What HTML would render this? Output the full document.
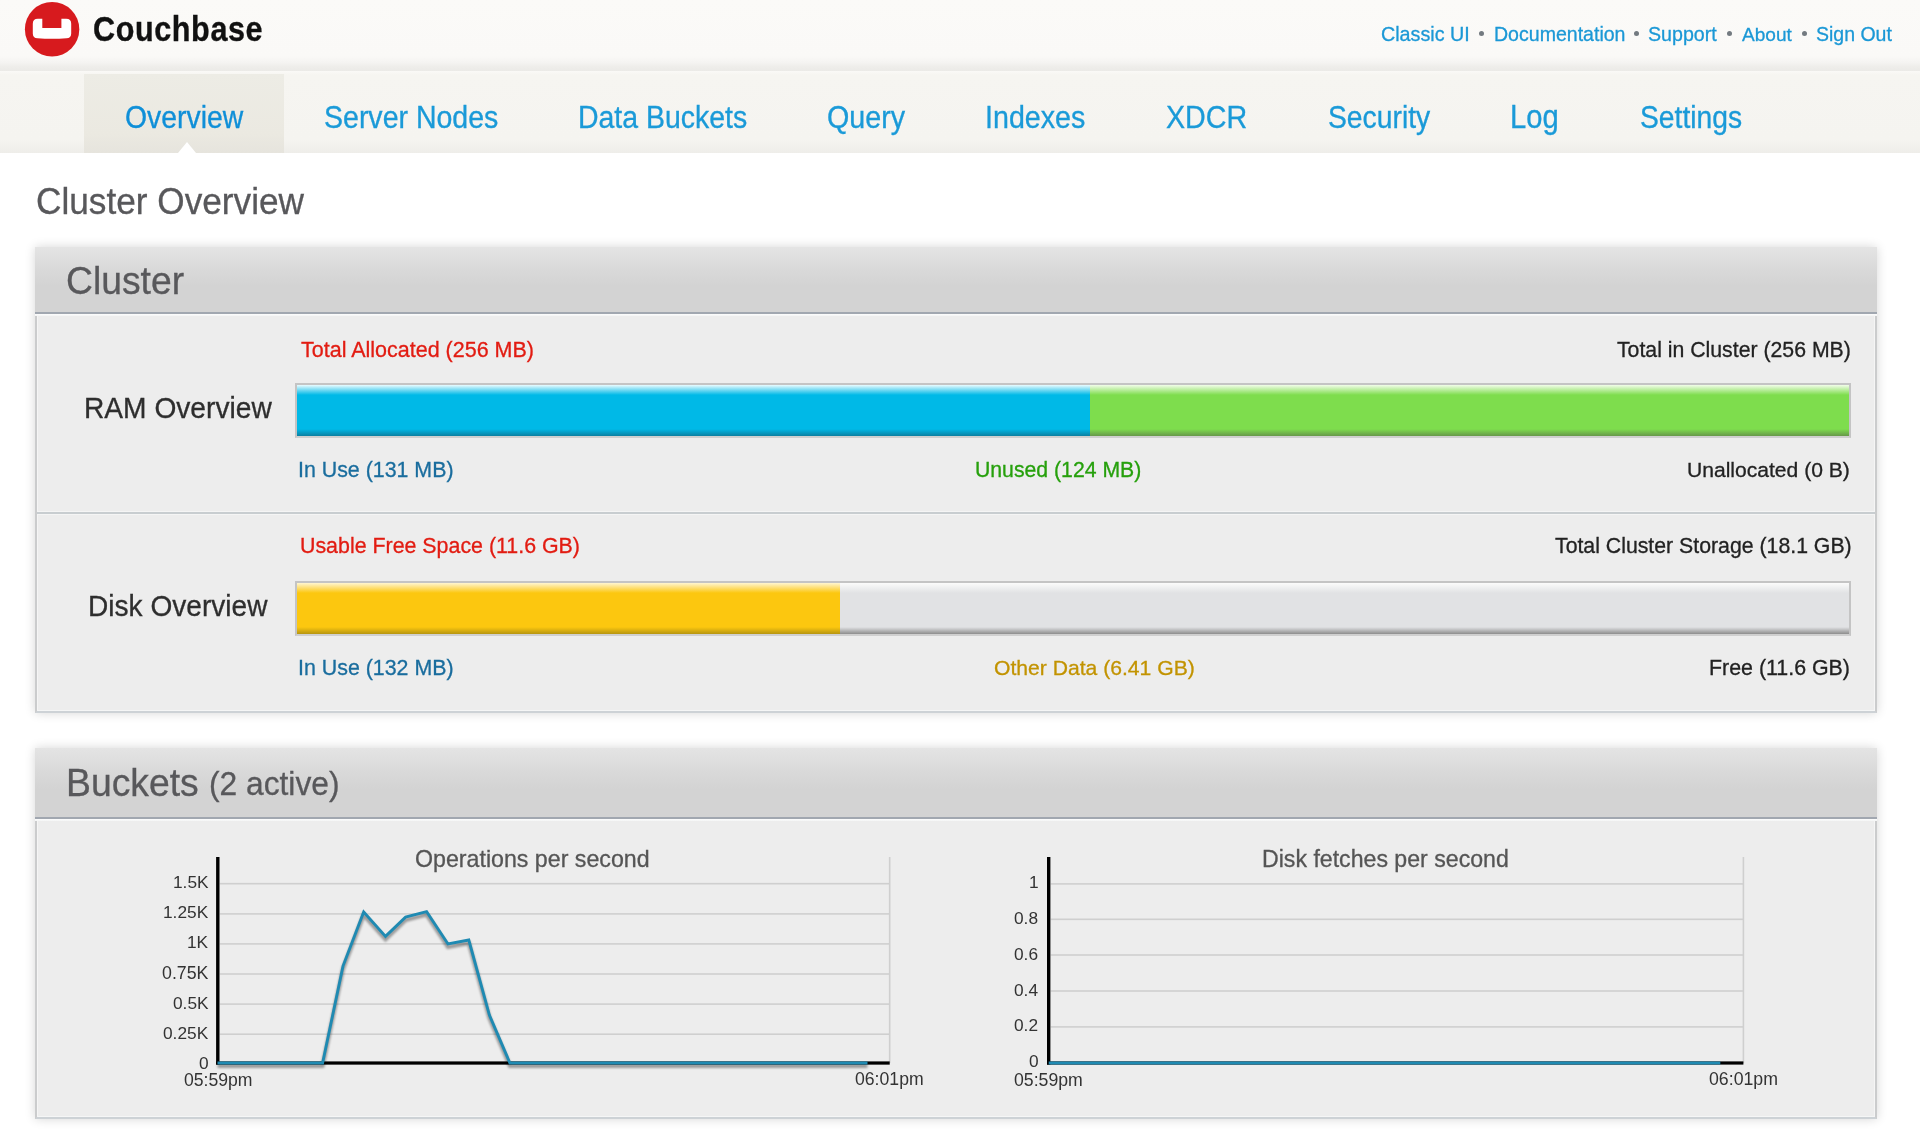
<!DOCTYPE html>
<html><head><meta charset="utf-8"><title>Couchbase Console</title>
<style>
html,body{margin:0;padding:0;}
body{width:1920px;height:1139px;overflow:hidden;position:relative;background:#fff;font-family:"Liberation Sans",sans-serif;}
.t{position:absolute;white-space:nowrap;line-height:1;will-change:transform;-webkit-text-stroke:0.3px currentColor;}
.abs{position:absolute;}
</style></head><body>
<div class="abs" style="left:0;top:0;width:1920px;height:71px;background:linear-gradient(to bottom,#fbfaf8 0px,#faf9f7 56px,#f5f4f2 62px,#eeedea 67px,#ebeae7 71px);"></div>
<div class="abs" style="left:0;top:71px;width:1920px;height:82px;background:linear-gradient(to bottom,#faf9f7 0px,#f6f5f1 4px,#f5f4f0 68px,#eeede9 82px);"></div>
<div class="abs" style="left:84px;top:74px;width:200px;height:79px;background:linear-gradient(to bottom,#edece5 0px,#ebe9e1 60px,#e6e4dd 79px);"></div>
<div class="abs" style="left:178px;top:142px;width:0;height:0;border-left:9px solid transparent;border-right:9px solid transparent;border-bottom:11px solid #fff;"></div>
<svg class="abs" style="left:0;top:0" width="100" height="70" viewBox="0 0 100 70">
<circle cx="52.1" cy="29.25" r="27.2" fill="#d71a1e"/>
<path d="M37.8 18.8 H42.3 V28 H61.4 V18.8 H66.2 Q71.2 18.8 71.2 23.8 V33.5 Q71.2 38 66.5 38.3 Q52 39.4 37.5 38.3 Q32.8 38 32.8 33.5 V23.8 Q32.8 18.8 37.8 18.8 Z" fill="#fff"/>
</svg>
<div class="abs" style="left:1478.6px;top:31px;width:5px;height:5px;border-radius:50%;background:#737a80;"></div>
<div class="abs" style="left:1633.8px;top:31px;width:5px;height:5px;border-radius:50%;background:#737a80;"></div>
<div class="abs" style="left:1726.5px;top:31px;width:5px;height:5px;border-radius:50%;background:#737a80;"></div>
<div class="abs" style="left:1801.7px;top:31px;width:5px;height:5px;border-radius:50%;background:#737a80;"></div>
<div class="abs" style="left:35px;top:247px;width:1842px;height:466px;box-shadow:0 0 10px rgba(0,0,0,0.16);"></div>
<div class="abs" style="left:35px;top:247px;width:1842px;height:65px;background:linear-gradient(to bottom,#e4e4e4 0%,#d9d9d9 35%,#d3d3d3 60%,#d3d3d3 100%);"></div>
<div class="abs" style="left:35px;top:312px;width:1842px;height:2px;background:#a1a7b0;"></div>
<div class="abs" style="left:35px;top:314px;width:1842px;height:2px;background:linear-gradient(to bottom,#fdfdfd,#f3f4f4);"></div>
<div class="abs" style="left:35px;top:316px;width:1838px;height:395px;background:#ededed;border-left:2px solid #cbcccd;border-right:2px solid #cbcccd;border-bottom:2px solid #cdd2d6;box-shadow:inset 1px 0 0 #f5f5f5,inset -1px 0 0 #f5f5f5,inset 0 -1px 0 #f5f6f6;"></div>
<div class="abs" style="left:37px;top:511px;width:1838px;height:1px;background:#f5f5f5;"></div>
<div class="abs" style="left:37px;top:512px;width:1838px;height:2px;background:#c8cdd0;"></div>
<div class="abs" style="left:37px;top:514px;width:1838px;height:1px;background:#f5f5f5;"></div>
<div class="abs" style="left:295px;top:383px;width:1552px;height:51px;border:2px solid #c4c4c4;border-bottom-color:#cfcfcf;"></div>
<div class="abs" style="left:297px;top:385px;width:793px;height:51px;background:linear-gradient(to bottom,#e8fbff 0px,#00b9e7 10px,#00b9e7 44px,#0b7fa1 51px);"></div>
<div class="abs" style="left:1090px;top:385px;width:759px;height:51px;background:linear-gradient(to bottom,#f2fde9 0px,#7edd4d 10px,#7edd4d 44px,#67984a 51px);"></div>
<div class="abs" style="left:295px;top:581px;width:1552px;height:51px;border:2px solid #c4c4c4;border-bottom-color:#cfcfcf;"></div>
<div class="abs" style="left:297px;top:583px;width:543px;height:51px;background:linear-gradient(to bottom,#fff5d0 0px,#fcc70f 10px,#fcc70f 44px,#b69510 51px);"></div>
<div class="abs" style="left:840px;top:583px;width:1009px;height:51px;background:linear-gradient(to bottom,#fbfbfb 0px,#e1e2e4 10px,#e1e2e4 44px,#8d8d8d 51px);"></div>
<div class="abs" style="left:35px;top:748px;width:1842px;height:371px;box-shadow:0 0 10px rgba(0,0,0,0.16);"></div>
<div class="abs" style="left:35px;top:748px;width:1842px;height:69px;background:linear-gradient(to bottom,#e4e4e4 0%,#d9d9d9 35%,#d3d3d3 60%,#d3d3d3 100%);"></div>
<div class="abs" style="left:35px;top:817px;width:1842px;height:2px;background:#a1a7b0;"></div>
<div class="abs" style="left:35px;top:819px;width:1842px;height:2px;background:linear-gradient(to bottom,#fdfdfd,#f3f4f4);"></div>
<div class="abs" style="left:35px;top:821px;width:1838px;height:296px;background:#ededed;border-left:2px solid #cbcccd;border-right:2px solid #cbcccd;border-bottom:2px solid #cdd2d6;box-shadow:inset 1px 0 0 #f5f5f5,inset -1px 0 0 #f5f5f5,inset 0 -1px 0 #f5f6f6;"></div>
<svg class="abs" style="left:0;top:0" width="1920" height="1139">
<defs><filter id="sh" x="-5%" y="-20%" width="110%" height="140%"><feGaussianBlur stdDeviation="1.2"/></filter></defs>
<rect x="219.8" y="882.90" width="669.9" height="1.6" fill="#cfcfcf"/>
<rect x="219.8" y="913.10" width="669.9" height="1.6" fill="#cfcfcf"/>
<rect x="219.8" y="943.10" width="669.9" height="1.6" fill="#cfcfcf"/>
<rect x="219.8" y="973.20" width="669.9" height="1.6" fill="#cfcfcf"/>
<rect x="219.8" y="1003.30" width="669.9" height="1.6" fill="#cfcfcf"/>
<rect x="219.8" y="1033.40" width="669.9" height="1.6" fill="#cfcfcf"/>
<rect x="219.8" y="1063.20" width="669.9" height="1.6" fill="#cfcfcf"/>
<rect x="888.9" y="857" width="1.6" height="206.0" fill="#cfcfcf"/>
<rect x="216.1" y="857" width="3.4" height="207.6" fill="#000"/>
<rect x="216.1" y="1061.4" width="673.6" height="3.2" fill="#000"/>
<path d="M217.5 1063.0 L322.6 1063.0 L343.0 966.1 L363.7 912.1 L385.5 936.4 L405.6 917.1 L426.6 911.6 L448.0 944.0 L468.8 940.0 L489.4 1015.1 L509.9 1063.0 L867.5 1063.0" transform="translate(0,3)" fill="none" stroke="rgba(0,0,0,0.35)" stroke-width="4" filter="url(#sh)"/>
<path d="M217.5 1063.0 L322.6 1063.0 L343.0 966.1 L363.7 912.1 L385.5 936.4 L405.6 917.1 L426.6 911.6 L448.0 944.0 L468.8 940.0 L489.4 1015.1 L509.9 1063.0 L867.5 1063.0" fill="none" stroke="#1f8ab2" stroke-width="2.9" stroke-linejoin="miter"/>
</svg>
<svg class="abs" style="left:0;top:0" width="1920" height="1139">
<defs><filter id="sh" x="-5%" y="-20%" width="110%" height="140%"><feGaussianBlur stdDeviation="1.2"/></filter></defs>
<rect x="1050.7" y="883.10" width="692.7" height="1.6" fill="#cfcfcf"/>
<rect x="1050.7" y="918.50" width="692.7" height="1.6" fill="#cfcfcf"/>
<rect x="1050.7" y="954.20" width="692.7" height="1.6" fill="#cfcfcf"/>
<rect x="1050.7" y="990.20" width="692.7" height="1.6" fill="#cfcfcf"/>
<rect x="1050.7" y="1026.10" width="692.7" height="1.6" fill="#cfcfcf"/>
<rect x="1050.7" y="1061.90" width="692.7" height="1.6" fill="#cfcfcf"/>
<rect x="1742.6" y="857" width="1.6" height="206.0" fill="#cfcfcf"/>
<rect x="1047.0" y="857" width="3.4" height="207.6" fill="#000"/>
<rect x="1047.0" y="1061.4" width="696.4" height="3.2" fill="#000"/>
<path d="M1048.7 1063.0 L1720.3 1063.0" transform="translate(0,3)" fill="none" stroke="rgba(0,0,0,0.35)" stroke-width="4" filter="url(#sh)"/>
<path d="M1048.7 1063.0 L1720.3 1063.0" fill="none" stroke="#1f8ab2" stroke-width="2.9" stroke-linejoin="miter"/>
</svg>
<div class="t" style="left:93.02px;top:15.01px;font-size:30.589px;color:#111;font-weight:bold;letter-spacing:0.6px;transform:scaleY(1.140);transform-origin:0 25.39px;">Couchbase</div>
<div class="t" style="left:1381.20px;top:24.82px;font-size:19.736px;color:#1b98d6;">Classic UI</div>
<div class="t" style="left:1493.76px;top:24.97px;font-size:19.556px;color:#1b98d6;">Documentation</div>
<div class="t" style="left:1647.75px;top:24.91px;font-size:19.632px;color:#1b98d6;">Support</div>
<div class="t" style="left:1741.50px;top:25.37px;font-size:19.073px;color:#1b98d6;">About</div>
<div class="t" style="left:1816.20px;top:25.01px;font-size:19.504px;color:#1b98d6;">Sign Out</div>
<div class="t" style="left:124.85px;top:103.76px;font-size:28.362px;color:#0f8fd8;transform:scaleY(1.120);transform-origin:0 23.54px;">Overview</div>
<div class="t" style="left:324.20px;top:103.62px;font-size:28.535px;color:#1a9ad8;transform:scaleY(1.120);transform-origin:0 23.68px;">Server Nodes</div>
<div class="t" style="left:577.60px;top:103.68px;font-size:28.462px;color:#1a9ad8;transform:scaleY(1.120);transform-origin:0 23.62px;">Data Buckets</div>
<div class="t" style="left:827.18px;top:104.48px;font-size:28.702px;color:#1a9ad8;transform:scaleY(1.120);transform-origin:0 23.82px;">Query</div>
<div class="t" style="left:985.10px;top:103.51px;font-size:28.663px;color:#1a9ad8;transform:scaleY(1.120);transform-origin:0 23.79px;">Indexes</div>
<div class="t" style="left:1166.20px;top:103.52px;font-size:28.655px;color:#1a9ad8;transform:scaleY(1.120);transform-origin:0 23.78px;">XDCR</div>
<div class="t" style="left:1327.75px;top:103.80px;font-size:28.315px;color:#1a9ad8;transform:scaleY(1.120);transform-origin:0 23.50px;">Security</div>
<div class="t" style="left:1510.10px;top:104.09px;font-size:29.172px;color:#1a9ad8;transform:scaleY(1.120);transform-origin:0 24.21px;">Log</div>
<div class="t" style="left:1639.84px;top:103.85px;font-size:28.255px;color:#1a9ad8;transform:scaleY(1.120);transform-origin:0 23.45px;">Settings</div>
<div class="t" style="left:35.66px;top:183.97px;font-size:35.215px;color:#58585b;transform:scaleY(1.040);transform-origin:0 29.23px;">Cluster Overview</div>
<div class="t" style="left:66.38px;top:263.23px;font-size:37.308px;color:#58585b;transform:scaleY(1.040);transform-origin:0 30.97px;">Cluster</div>
<div class="t" style="left:301.10px;top:340.14px;font-size:21.517px;color:#e21c12;">Total Allocated (256 MB)</div>
<div class="t" style="right:69.22px;text-align:right;top:340.05px;font-size:21.266px;color:#222;">Total in Cluster (256 MB)</div>
<div class="t" style="left:84.12px;top:394.72px;font-size:28.163px;color:#2e2e2e;transform:scaleY(1.030);transform-origin:0 23.38px;">RAM Overview</div>
<div class="t" style="left:298.16px;top:459.56px;font-size:21.377px;color:#1a6d9e;">In Use (131 MB)</div>
<div class="t" style="left:974.66px;top:458.68px;font-size:21.224px;color:#26a00c;">Unused (124 MB)</div>
<div class="t" style="right:70.20px;text-align:right;top:459.49px;font-size:21.094px;color:#222;">Unallocated (0 B)</div>
<div class="t" style="left:300.02px;top:536.45px;font-size:21.380px;color:#e21c12;">Usable Free Space (11.6 GB)</div>
<div class="t" style="right:68.56px;text-align:right;top:535.54px;font-size:21.278px;color:#222;">Total Cluster Storage (18.1 GB)</div>
<div class="t" style="left:88.22px;top:592.69px;font-size:28.086px;color:#2e2e2e;transform:scaleY(1.030);transform-origin:0 23.31px;">Disk Overview</div>
<div class="t" style="left:298.10px;top:657.65px;font-size:21.390px;color:#1a6d9e;">In Use (132 MB)</div>
<div class="t" style="left:993.76px;top:656.66px;font-size:21.138px;color:#c29300;">Other Data (6.41 GB)</div>
<div class="t" style="right:69.64px;text-align:right;top:658.44px;font-size:21.396px;color:#222;">Free (11.6 GB)</div>
<div class="t" style="left:65.80px;top:764.50px;font-size:37.347px;color:#58585b;transform:scaleY(1.040);transform-origin:0 31.00px;">Buckets</div>
<div class="t" style="left:209.16px;top:769.15px;font-size:31.749px;color:#58585b;transform:scaleY(1.040);transform-origin:0 26.35px;">(2 active)</div>
<div class="t" style="left:414.76px;top:847.85px;font-size:23.198px;color:#555;">Operations per second</div>
<div class="t" style="left:1261.94px;top:847.90px;font-size:23.136px;color:#555;">Disk fetches per second</div>
<div class="t" style="left:183.56px;top:1071.97px;font-size:17.630px;color:#333;-webkit-text-stroke:0;">05:59pm</div>
<div class="t" style="left:854.80px;top:1070.65px;font-size:17.654px;color:#333;-webkit-text-stroke:0;">06:01pm</div>
<div class="t" style="left:1013.90px;top:1071.93px;font-size:17.680px;color:#333;-webkit-text-stroke:0;">05:59pm</div>
<div class="t" style="left:1708.70px;top:1070.59px;font-size:17.725px;color:#333;-webkit-text-stroke:0;">06:01pm</div>
<div class="t" style="right:1711.20px;text-align:right;top:873.94px;font-size:17.300px;color:#333;-webkit-text-stroke:0;">1.5K</div>
<div class="t" style="right:1712.00px;text-align:right;top:904.14px;font-size:17.300px;color:#333;-webkit-text-stroke:0;">1.25K</div>
<div class="t" style="right:1712.00px;text-align:right;top:934.14px;font-size:17.300px;color:#333;-webkit-text-stroke:0;">1K</div>
<div class="t" style="right:1711.20px;text-align:right;top:964.84px;font-size:17.788px;color:#333;-webkit-text-stroke:0;">0.75K</div>
<div class="t" style="right:1711.20px;text-align:right;top:995.34px;font-size:17.300px;color:#333;-webkit-text-stroke:0;">0.5K</div>
<div class="t" style="right:1712.00px;text-align:right;top:1025.44px;font-size:17.300px;color:#333;-webkit-text-stroke:0;">0.25K</div>
<div class="t" style="right:1711.20px;text-align:right;top:1055.24px;font-size:17.300px;color:#333;-webkit-text-stroke:0;">0</div>
<div class="t" style="right:881.80px;text-align:right;top:874.14px;font-size:17.300px;color:#333;-webkit-text-stroke:0;">1</div>
<div class="t" style="right:881.80px;text-align:right;top:909.54px;font-size:17.300px;color:#333;-webkit-text-stroke:0;">0.8</div>
<div class="t" style="right:881.80px;text-align:right;top:946.24px;font-size:17.300px;color:#333;-webkit-text-stroke:0;">0.6</div>
<div class="t" style="right:881.80px;text-align:right;top:982.24px;font-size:17.300px;color:#333;-webkit-text-stroke:0;">0.4</div>
<div class="t" style="right:881.80px;text-align:right;top:1017.14px;font-size:17.300px;color:#333;-webkit-text-stroke:0;">0.2</div>
<div class="t" style="right:881.80px;text-align:right;top:1052.94px;font-size:17.300px;color:#333;-webkit-text-stroke:0;">0</div>
</body></html>
